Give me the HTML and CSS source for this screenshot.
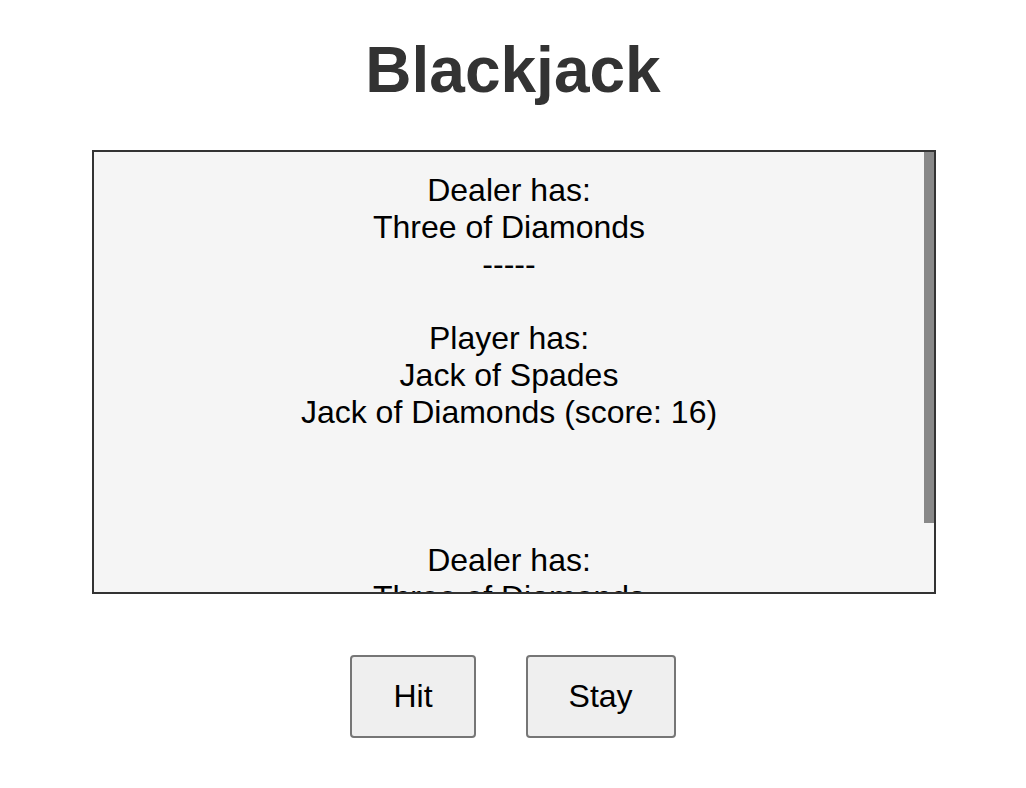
FILE: index.html
```html
<!DOCTYPE html>
<html>
  <head>
    <meta name="viewport" content="width=device-width, initial-scale=1">
    <title>Blackjack</title>
    <link rel="stylesheet" href="styles.css">
  </head>
  <body>
    <h1 class="title">Blackjack</h1>

    <div class="panel">
      <div class="log" id="log">
        <div class="turn">
          Dealer has:<br>
          Three of Diamonds<br>
          -----<br>
          <br>
          Player has:<br>
          Jack of Spades<br>
          Jack of Diamonds (score: 16)
        </div>
        <div class="turn">
          Dealer has:<br>
          Three of Diamonds<br>
          -----
        </div>
      </div>
      <div class="thumb"></div>
    </div>

    <div class="controls">
      <button class="btn" id="hit">Hit</button>
      <button class="btn" id="stay">Stay</button>
    </div>
  </body>
</html>
```

FILE: styles.css
```css
body { margin: 0; font-family: "Liberation Sans", Arial, sans-serif; font-size: 32px; text-align: center; color: black; background: white }
.title { margin: 33px 0 43px; font-size: 64px; font-weight: bold; color: #333 }

.panel { position: relative; width: 840px; margin: 0 auto; transform: translateX(1px); border: 2px solid #333; background: #f5f5f5 }
.log { box-sizing: border-box; height: 440px; padding: 20px 30px 20px 20px; overflow-y: auto; scrollbar-width: none }
.log::-webkit-scrollbar { display: none }
.thumb { position: absolute; top: 0; right: 0; width: 10px; height: 371px; background: #888 }
.turn + .turn { margin-top: 111px }

.controls { display: flex; justify-content: center; gap: 50px; margin-top: 61px }
.btn { font-family: inherit; font-size: 32px; color: black; padding: 21px 41px; border: 2px solid #767676; border-radius: 4px; background: #efefef }
```
